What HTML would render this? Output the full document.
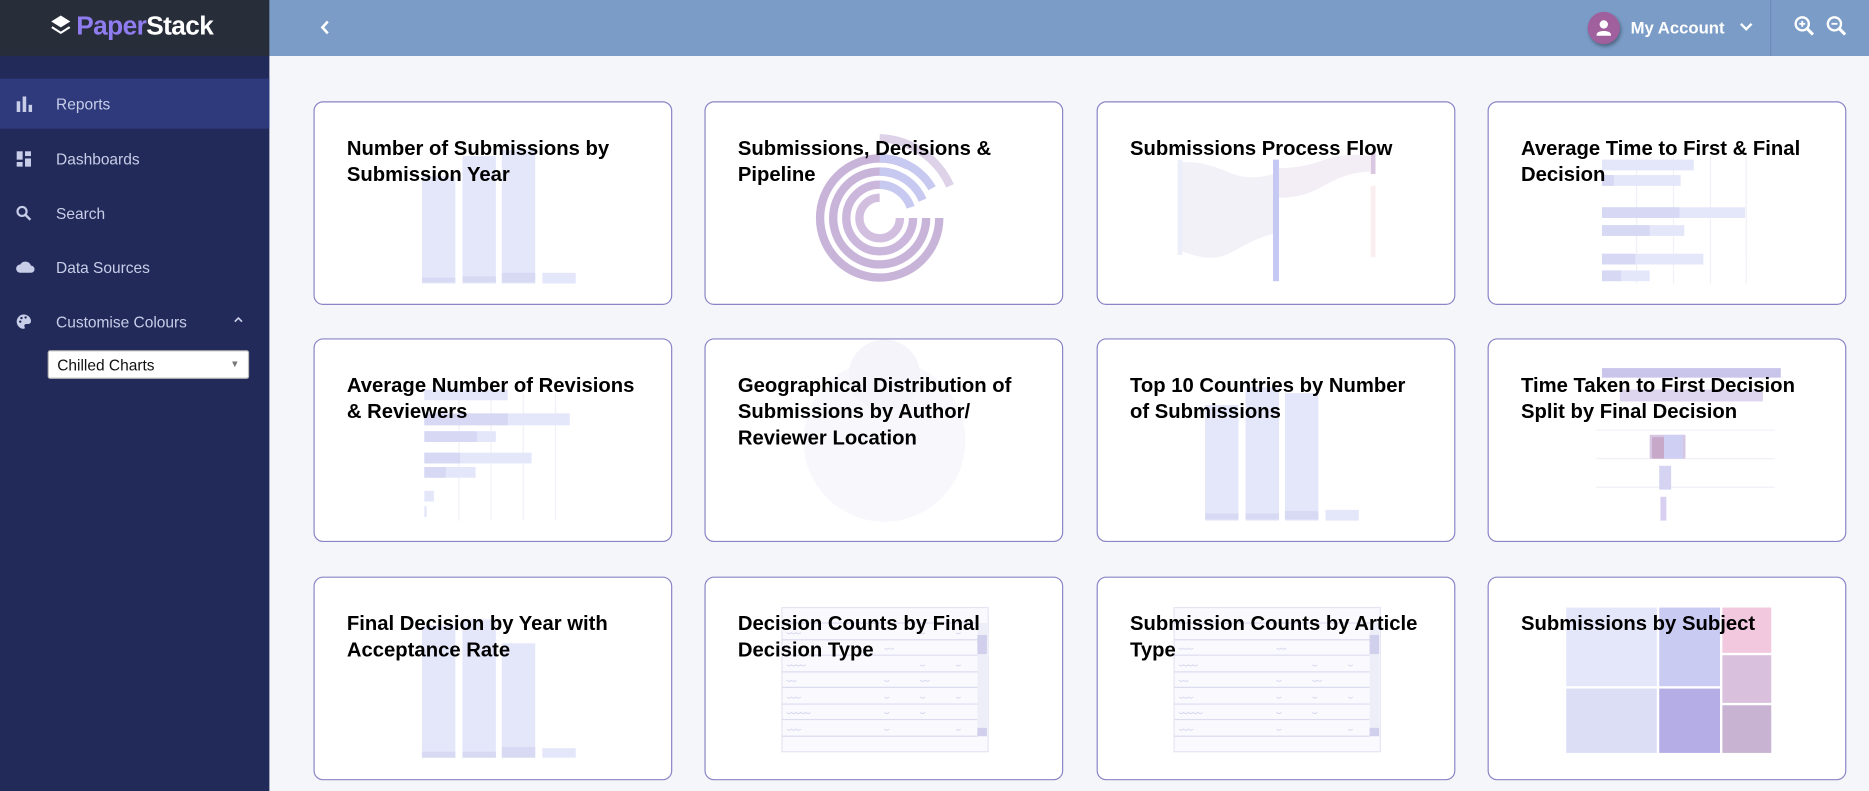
<!DOCTYPE html>
<html><head><meta charset="utf-8"><style>
*{box-sizing:border-box;margin:0;padding:0}
html,body{width:1869px;height:791px;overflow:hidden;background:#f5f6fa}
#w{position:absolute;left:0;top:0;width:1568px;height:664px;transform:scale(1.19196,1.1913);transform-origin:0 0;font-family:"Liberation Sans",Arial,sans-serif}
.sb{position:absolute;left:0;top:0;width:226px;height:664px;background:#222a5a}
.logo{position:absolute;left:0;top:0;width:226px;height:47px;background:#282d3a}
.logo .t{position:absolute;left:64px;top:9px;font-size:22px;font-weight:bold;letter-spacing:-0.5px}
.nav{position:absolute;left:0;width:226px;height:42px;color:#c8cde8;font-size:13px}
.nav span{position:absolute;left:47px;top:14px}
.nav svg{position:absolute;left:13px;top:14px}
.hd{position:absolute;left:226px;top:0;width:1342px;height:47px;background:#7a9cc6}
.card{position:absolute;width:301px;height:171px;background:#fff;border:1px solid #8a84c6;border-radius:8px;overflow:hidden}
.card h3{position:absolute;left:27px;top:28px;font-size:17px;line-height:22px;font-weight:bold;color:#000;width:246px;z-index:2}
.card svg.c{position:absolute;left:0;top:0}
</style></head><body><div id="w">
<div class="sb">
 <div class="logo">
  <svg style="position:absolute;left:42px;top:12px" width="18" height="20" viewBox="0 0 18 20"><path d="M9 1 L17 6 L9 11 L1 6Z" fill="#fff"/><path d="M2 10 L9 14.5 L16 10 L17 11.5 L9 16.5 L1 11.5Z" fill="#fff"/></svg>
  <div class="t"><span style="color:#8f7cf0">Paper</span><span style="color:#fff">Stack</span></div>
 </div>
 <div class="nav" style="top:66px;background:#2e3a7c"><svg width="14" height="14" viewBox="0 0 14 14"><rect x="1" y="5" width="3" height="9" fill="#c8cde8"/><rect x="6" y="1" width="3" height="13" fill="#c8cde8"/><rect x="11" y="8" width="3" height="6" fill="#c8cde8"/></svg><span>Reports</span></div>
 <div class="nav" style="top:112px"><svg width="14" height="14" viewBox="0 0 14 14"><rect x="1" y="1" width="5" height="7" fill="#c8cde8"/><rect x="8" y="1" width="5" height="4" fill="#c8cde8"/><rect x="1" y="10" width="5" height="4" fill="#c8cde8"/><rect x="8" y="7" width="5" height="7" fill="#c8cde8"/></svg><span>Dashboards</span></div>
 <div class="nav" style="top:158px"><svg width="14" height="14" viewBox="0 0 14 14"><circle cx="5.5" cy="5.5" r="3.8" fill="none" stroke="#c8cde8" stroke-width="1.8"/><path d="M8.5 8.5 L12.5 12.5" stroke="#c8cde8" stroke-width="2"/></svg><span>Search</span></div>
 <div class="nav" style="top:203px"><svg width="16" height="14" viewBox="0 0 16 14"><path d="M4 12 A3.5 3.5 0 0 1 4 5 A5 5 0 0 1 13 6 A3 3 0 0 1 13 12Z" fill="#c8cde8"/></svg><span>Data Sources</span></div>
 <div class="nav" style="top:249px"><svg width="14" height="14" viewBox="0 0 14 14"><path d="M7 1 A6 6 0 0 0 7 13 C8 13 8 12 7.5 11 C7 10 8 9 9 9 L11 9 A2.5 2.5 0 0 0 13 6.5 C13 3.5 10 1 7 1Z" fill="#c8cde8"/><circle cx="4" cy="7" r="1" fill="#222a5a"/><circle cx="5" cy="4" r="1" fill="#222a5a"/><circle cx="8.5" cy="3.5" r="1" fill="#222a5a"/></svg><span>Customise Colours</span><svg style="left:196px;top:16px" width="8" height="6" viewBox="0 0 8 6"><path d="M1 5 L4 2 L7 5" fill="none" stroke="#c8cde8" stroke-width="1.4"/></svg></div>
 <div style="position:absolute;left:40px;top:294px;width:169px;height:24px;background:#fff;border:1px solid #bbb;border-radius:2px;font-size:13px;color:#111;padding:4px 0 0 7px">Chilled Charts<span style="position:absolute;right:7px;top:6px;font-size:8px;color:#777">▼</span></div>
</div>
<div class="hd">
 <svg style="position:absolute;left:42px;top:16px" width="10" height="14" viewBox="0 0 10 14"><path d="M7 2 L2.5 7 L7 12" fill="none" stroke="#fff" stroke-width="2.2"/></svg>
 <div style="position:absolute;left:1106px;top:10px;width:27px;height:27px;border-radius:50%;background:#a0609e;box-shadow:1px 2px 3px rgba(0,0,0,.35)"><svg width="27" height="27" viewBox="0 0 27 27"><circle cx="13.5" cy="10.5" r="3.5" fill="#fff"/><path d="M7.5 19 C7.5 15 19.5 15 19.5 19 L19.5 20 L7.5 20Z" fill="#fff"/></svg></div>
 <div style="position:absolute;left:1142px;top:15px;color:#fff;font-size:14px;font-weight:bold">My Account</div>
 <svg style="position:absolute;left:1233px;top:18px" width="12" height="9" viewBox="0 0 12 9"><path d="M1.5 2 L6 6.5 L10.5 2" fill="none" stroke="#fff" stroke-width="2"/></svg>
 <div style="position:absolute;left:1259px;top:0;width:1px;height:47px;background:#6f8cbc"></div>
 <svg style="position:absolute;left:1278px;top:12px" width="20" height="20" viewBox="0 0 20 20"><circle cx="8" cy="8" r="5.5" fill="none" stroke="#fff" stroke-width="2"/><path d="M12 12 L17 17" stroke="#fff" stroke-width="2.6"/><path d="M5.5 8 H10.5 M8 5.5 V10.5" stroke="#fff" stroke-width="1.6"/></svg>
 <svg style="position:absolute;left:1305px;top:12px" width="20" height="20" viewBox="0 0 20 20"><circle cx="8" cy="8" r="5.5" fill="none" stroke="#fff" stroke-width="2"/><path d="M12 12 L17 17" stroke="#fff" stroke-width="2.6"/><path d="M5.5 8 H10.5" stroke="#fff" stroke-width="1.6"/></svg>
</div>

<!-- Row 1 -->
<div class="card" style="left:263px;top:85px"><svg class="c" width="301" height="171"><g fill="#e4e6fa"><rect x="90" y="62" width="28" height="90"/><rect x="124" y="45" width="28" height="107"/><rect x="157" y="40" width="28" height="112"/><rect x="191" y="143" width="28" height="9"/></g><g fill="#d8daf4"><rect x="90" y="147" width="28" height="4"/><rect x="124" y="146" width="28" height="5"/><rect x="157" y="143" width="28" height="8"/></g></svg><h3>Number of Submissions by Submission Year</h3></div>
<div class="card" style="left:591px;top:85px"><svg class="c" width="301" height="171"><g fill="none" stroke-width="7"><circle cx="146" cy="97" r="17" stroke="#d2bfe0" stroke-dasharray="80 30"/><circle cx="146" cy="97" r="28" stroke="#cbb6dc" stroke-dasharray="140 40"/><circle cx="146" cy="97" r="39" stroke="#c9b4d9" stroke-dasharray="200 50"/><circle cx="146" cy="97" r="50" stroke="#c8b4d8" stroke-dasharray="260 60"/><path d="M146 30 A67 67 0 0 1 205 70" stroke="#ddd2e8"/><path d="M146 47 A50 50 0 0 1 190 72" stroke="#c7c9f0"/><path d="M146 58 A39 39 0 0 1 182 82" stroke="#c7c9f0"/><path d="M146 69 A28 28 0 0 1 172 88" stroke="#c7c9f0"/></g></svg><h3>Submissions, Decisions &amp; Pipeline</h3></div>
<div class="card" style="left:920px;top:85px"><svg class="c" width="301" height="171"><rect x="67" y="48" width="4" height="80" fill="#eceefa"/><path d="M71 50 C110 50 110 70 148 60 L148 110 C110 120 110 140 71 125Z" fill="#f3f1f8"/><rect x="147" y="48" width="5" height="102" fill="#c5c8f2"/><rect x="229" y="42" width="4" height="18" fill="#d9c7e2"/><rect x="229" y="70" width="4" height="60" fill="#fbeef0"/><path d="M152 55 C190 55 190 40 229 45 L229 58 C190 60 190 80 152 80Z" fill="#f3eef5"/></svg><h3>Submissions Process Flow</h3></div>
<div class="card" style="left:1248px;top:85px"><svg class="c" width="301" height="171"><g stroke="#f0f0f8"><path d="M124 45 V152 M155 45 V152 M186 45 V152 M216 45 V152"/></g><g fill="#e4e6fa"><rect x="95" y="48" width="77" height="9"/><rect x="95" y="61" width="66" height="9"/><rect x="95" y="88" width="120" height="9"/><rect x="95" y="103" width="69" height="9"/><rect x="95" y="127" width="85" height="9"/><rect x="95" y="141" width="40" height="9"/></g><g fill="#d6d8f4"><rect x="95" y="61" width="10" height="9"/><rect x="95" y="88" width="65" height="9"/><rect x="95" y="103" width="40" height="9"/><rect x="95" y="127" width="28" height="9"/><rect x="95" y="141" width="16" height="9"/></g></svg><h3>Average Time to First &amp; Final Decision</h3></div>

<!-- Row 2 -->
<div class="card" style="left:263px;top:284px"><svg class="c" width="301" height="171"><g stroke="#f0f0f8"><path d="M121 45 V152 M148 45 V152 M175 45 V152 M202 45 V152"/></g><g fill="#e4e6fa"><rect x="92" y="42" width="70" height="9"/><rect x="92" y="62" width="122" height="10"/><rect x="92" y="77" width="60" height="9"/><rect x="92" y="95" width="90" height="9"/><rect x="92" y="107" width="43" height="9"/><rect x="92" y="127" width="8" height="9"/><rect x="92" y="140" width="2" height="9"/></g><g fill="#d6d8f4"><rect x="92" y="62" width="70" height="10"/><rect x="92" y="77" width="44" height="9"/><rect x="92" y="95" width="30" height="9"/><rect x="92" y="107" width="18" height="9"/></g></svg><h3>Average Number of Revisions &amp; Reviewers</h3></div>
<div class="card" style="left:591px;top:284px"><svg class="c" width="301" height="171"><circle cx="150" cy="85" r="68" fill="#f8f8fc"/><circle cx="150" cy="30" r="30" fill="#f4f4fa"/></svg><h3>Geographical Distribution of Submissions by Author/ Reviewer Location</h3></div>
<div class="card" style="left:920px;top:284px"><svg class="c" width="301" height="171"><g fill="#e4e6fa"><rect x="90" y="55" width="28" height="97"/><rect x="124" y="40" width="28" height="112"/><rect x="157" y="45" width="28" height="107"/><rect x="191" y="143" width="28" height="9"/></g><g fill="#d8daf4"><rect x="90" y="146" width="28" height="5"/><rect x="124" y="146" width="28" height="5"/><rect x="157" y="144" width="28" height="7"/></g></svg><h3>Top 10 Countries by Number of Submissions</h3></div>
<div class="card" style="left:1248px;top:284px"><svg class="c" width="301" height="171"><g stroke="#f0f0f8"><path d="M90 76 H240 M90 100 H240 M90 124 H240"/></g><rect x="95" y="24" width="150" height="8" fill="#c8c4ea"/><rect x="110" y="42" width="120" height="10" fill="#ddd6ee"/><rect x="135" y="80" width="30" height="20" fill="#d6c6e2"/><rect x="147" y="80" width="16" height="20" fill="#cfcff4"/><rect x="137" y="82" width="10" height="18" fill="#c8a8c8"/><rect x="143" y="106" width="10" height="20" fill="#d4d4f2"/><rect x="144" y="132" width="5" height="20" fill="#d8d0f0"/></svg><h3>Time Taken to First Decision Split by Final Decision</h3></div>

<!-- Row 3 -->
<div class="card" style="left:263px;top:484px"><svg class="c" width="301" height="171"><g fill="#e4e6fa"><rect x="90" y="40" width="28" height="111"/><rect x="124" y="35" width="28" height="116"/><rect x="157" y="55" width="28" height="96"/><rect x="191" y="143" width="28" height="8"/></g><g fill="#d8daf4"><rect x="90" y="146" width="28" height="5"/><rect x="124" y="146" width="28" height="5"/><rect x="157" y="142" width="28" height="9"/></g></svg><h3>Final Decision by Year with Acceptance Rate</h3></div>
<div class="card" style="left:591px;top:484px"><svg class="c" width="301" height="171"><rect x="64" y="25" width="173" height="121" fill="#fafafe" stroke="#e4e4f2"/><g stroke="#dcdcf0"><path d="M64 38 H228 M64 52 H228 M64 65 H228 M64 79 H228 M64 92 H228 M64 106 H228 M64 119 H228 M64 133 H228"/></g><rect x="228" y="38" width="8" height="95" fill="#eeeef8"/><rect x="228" y="48" width="8" height="16" fill="#d0d0ec"/><rect x="228" y="126" width="8" height="7" fill="#d0d0ec"/><g stroke="#d8d8ee" fill="none" stroke-width="0.8"><path d="M68 46 q2 2 4 0 q2 2 4 0 q2 2 4 0 M68 73 q2 2 4 0 q2 2 4 0 q2 2 4 0 q2 2 4 0 M68 86 q2 2 4 0 q2 2 4 0 M68 100 q2 2 4 0 q2 2 4 0 q2 2 4 0 M68 113 q2 2 4 0 q2 2 4 0 q2 2 4 0 q2 2 4 0 q2 2 4 0 M68 127 q2 2 4 0 q2 2 4 0 q2 2 4 0 M180 46 q2 2 4 0 M210 46 q2 2 4 0 M150 59 q2 2 4 0 q2 2 4 0 M180 73 q2 2 4 0 M210 73 q2 2 4 0 M150 86 q2 2 4 0 M180 86 q2 2 4 0 q2 2 4 0 M150 100 q2 2 4 0 M180 100 q2 2 4 0 M210 100 q2 2 4 0 M150 113 q2 2 4 0 M180 113 q2 2 4 0 M150 127 q2 2 4 0 M210 127 q2 2 4 0"/></g></svg><h3>Decision Counts by Final Decision Type</h3></div>
<div class="card" style="left:920px;top:484px"><svg class="c" width="301" height="171"><rect x="64" y="25" width="173" height="121" fill="#fafafe" stroke="#e4e4f2"/><g stroke="#dcdcf0"><path d="M64 38 H228 M64 52 H228 M64 65 H228 M64 79 H228 M64 92 H228 M64 106 H228 M64 119 H228 M64 133 H228"/></g><rect x="228" y="38" width="8" height="95" fill="#eeeef8"/><rect x="228" y="48" width="8" height="16" fill="#d0d0ec"/><rect x="228" y="126" width="8" height="7" fill="#d0d0ec"/><g stroke="#d8d8ee" fill="none" stroke-width="0.8"><path d="M68 59 q2 2 4 0 q2 2 4 0 q2 2 4 0 M68 73 q2 2 4 0 q2 2 4 0 q2 2 4 0 q2 2 4 0 M68 86 q2 2 4 0 q2 2 4 0 M68 100 q2 2 4 0 q2 2 4 0 q2 2 4 0 M68 113 q2 2 4 0 q2 2 4 0 q2 2 4 0 q2 2 4 0 q2 2 4 0 M68 127 q2 2 4 0 q2 2 4 0 q2 2 4 0 M150 59 q2 2 4 0 q2 2 4 0 M180 73 q2 2 4 0 M210 73 q2 2 4 0 M150 86 q2 2 4 0 M180 86 q2 2 4 0 q2 2 4 0 M150 100 q2 2 4 0 M180 100 q2 2 4 0 M210 100 q2 2 4 0 M150 113 q2 2 4 0 M180 113 q2 2 4 0 M150 127 q2 2 4 0 M210 127 q2 2 4 0"/></g></svg><h3>Submission Counts by Article Type</h3></div>
<div class="card" style="left:1248px;top:484px"><svg class="c" width="301" height="171"><rect x="65" y="25" width="76" height="66" fill="#e4e6fa"/><rect x="65" y="93" width="76" height="54" fill="#dcdef6"/><rect x="143" y="25" width="51" height="66" fill="#c9cbf2"/><rect x="143" y="93" width="51" height="54" fill="#b5aee6"/><rect x="196" y="25" width="41" height="38" fill="#f1c8de"/><rect x="196" y="65" width="41" height="40" fill="#d9c0dc"/><rect x="196" y="107" width="41" height="40" fill="#c8b4d2"/></svg><h3>Submissions by Subject</h3></div>
</div></body></html>
